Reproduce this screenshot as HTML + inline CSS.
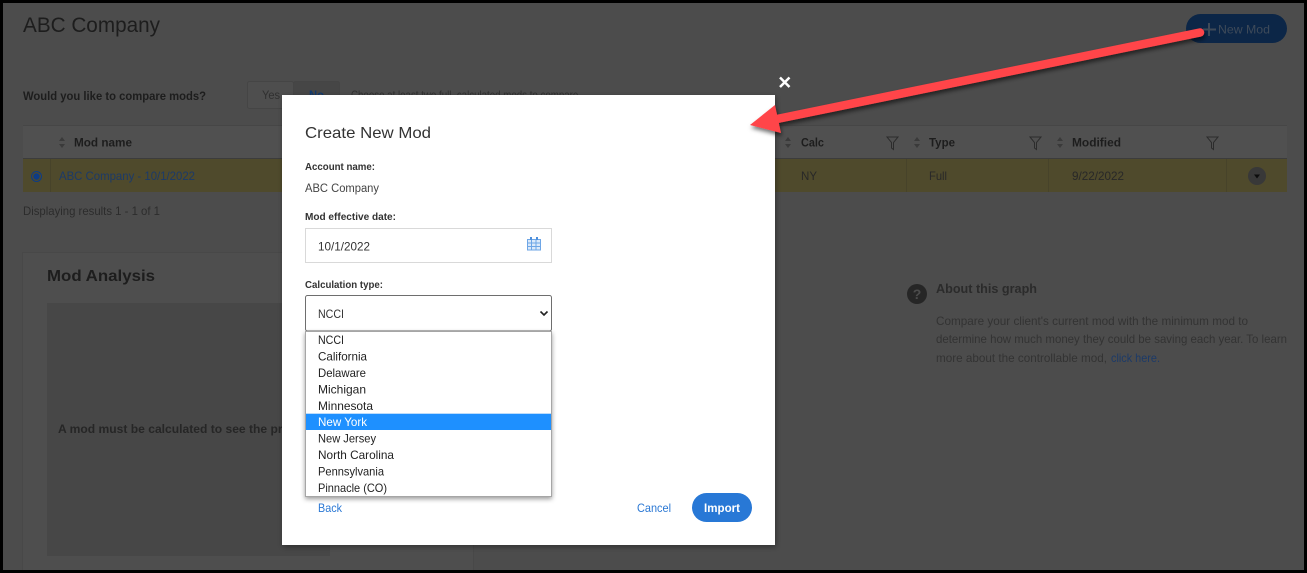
<!DOCTYPE html>
<html><head><meta charset="utf-8"><title>Create New Mod</title>
<style>
html,body{margin:0;padding:0;background:#000;width:1307px;height:573px;overflow:hidden}
svg{display:block}
text{font-family:"Liberation Sans",Arial,sans-serif;font-size:12px}
.b{font-weight:bold}
.d{fill:#1d1d1d}
.g{fill:#2f2f2f}
.m{fill:#333}
.i{fill:#222;font-size:12px}
</style></head><body>
<svg width="1307" height="573" viewBox="0 0 1307 573" xmlns="http://www.w3.org/2000/svg">
<defs>
<filter id="ms" x="-10%" y="-10%" width="120%" height="120%"><feDropShadow dx="1" dy="2" stdDeviation="3" flood-color="#000" flood-opacity=".35"/></filter>
<filter id="ds" x="-10%" y="-10%" width="120%" height="120%"><feDropShadow dx="0" dy="2" stdDeviation="2.5" flood-color="#000" flood-opacity=".4"/></filter>
<filter id="as" x="-10%" y="-30%" width="120%" height="170%"><feDropShadow dx="1" dy="3" stdDeviation="2" flood-color="#000" flood-opacity=".55"/></filter>
</defs>
<rect x="3" y="3" width="1301" height="567" fill="#4c4c4c"/>

<text class="d" x="23" y="32" font-size="21" style="font-size:21px" textLength="137" lengthAdjust="spacingAndGlyphs">ABC Company</text>
<text class="b d" x="23" y="100" textLength="183" lengthAdjust="spacingAndGlyphs">Would you like to compare mods?</text>
<rect x="247.500" y="81.500" width="46" height="27" rx="2" fill="#4e4e4e" stroke="#454545"/>
<rect x="293.500" y="81.500" width="46" height="27" rx="2" fill="#464646" stroke="#454545"/>
<text x="262" y="99" fill="#303030" textLength="18" lengthAdjust="spacingAndGlyphs">Yes</text>
<text class="b" x="309" y="99" fill="#123a70" textLength="15" lengthAdjust="spacingAndGlyphs">No</text>
<text x="351" y="99" fill="#303030" textLength="230" lengthAdjust="spacingAndGlyphs">Choose at least two full, calculated mods to compare.</text>

<rect x="23" y="125" width="1264" height="33" fill="#505050"/>
<rect x="23" y="125" width="1264" height="1" fill="#464646"/>
<rect x="23" y="158" width="1264" height="1" fill="#3c3c3c"/>
<rect x="23" y="159" width="1264" height="33" fill="#4f4a2c"/>
<rect x="50" y="159" width="1" height="33" fill="#47432a"/>
<rect x="906" y="159" width="1" height="33" fill="#47432a"/>
<rect x="1048" y="159" width="1" height="33" fill="#47432a"/>
<rect x="1226" y="159" width="1" height="33" fill="#47432a"/>

<g fill="#3a3a3a">
<path d="M59 141l3-4 3 4zM59 144l3 4 3-4z"/>
<path d="M785 141l3-4 3 4zM785 144l3 4 3-4z"/>
<path d="M914 141l3-4 3 4zM914 144l3 4 3-4z"/>
<path d="M1057 141l3-4 3 4zM1057 144l3 4 3-4z"/>
</g>
<text class="b d" x="74" y="146.500" textLength="58" lengthAdjust="spacingAndGlyphs">Mod name</text>
<text class="b d" x="801" y="146.500" textLength="23" lengthAdjust="spacingAndGlyphs">Calc</text>
<text class="b d" x="929" y="146.500" textLength="26" lengthAdjust="spacingAndGlyphs">Type</text>
<text class="b d" x="1072" y="146.500" textLength="49" lengthAdjust="spacingAndGlyphs">Modified</text>
<g fill="none" stroke="#2c2c2c" stroke-width="1">
<path d="M887 137h11l-4.500 5.500v7l-2-1.500v-5.500z"/>
<path d="M1030 137h11l-4.500 5.500v7l-2-1.500v-5.500z"/>
<path d="M1207 137h11l-4.500 5.500v7l-2-1.500v-5.500z"/>
</g>

<circle cx="36.500" cy="176.500" r="5" fill="none" stroke="#0d3c86" stroke-width="1"/>
<circle cx="36.500" cy="176.500" r="3.200" fill="#0d3c86"/>
<text x="59" y="180" fill="#1c3a68" textLength="136" lengthAdjust="spacingAndGlyphs">ABC Company - 10/1/2022</text>
<text x="801" y="180" fill="#282828" textLength="16" lengthAdjust="spacingAndGlyphs">NY</text>
<text x="929" y="180" fill="#282828" textLength="18" lengthAdjust="spacingAndGlyphs">Full</text>
<text x="1072" y="180" fill="#282828" textLength="52" lengthAdjust="spacingAndGlyphs">9/22/2022</text>
<circle cx="1257" cy="176" r="9" fill="#383838"/>
<path d="M1254 174.500h6l-3 4z" fill="#0d0d0d"/>
<text x="23" y="215" fill="#2c2c2c" textLength="137" lengthAdjust="spacingAndGlyphs">Displaying results 1 - 1 of 1</text>
<text x="155" y="215" fill="#1c3a68" textLength="5" lengthAdjust="spacingAndGlyphs"> </text>

<rect x="1186" y="14" width="101" height="29" rx="14.500" fill="#0c2647"/>
<path d="M1209 23v13M1203 29.500h13" stroke="#3f4a58" stroke-width="2"/>
<text x="1218" y="33.500" fill="#3e4a59" textLength="52" lengthAdjust="spacingAndGlyphs">New Mod</text>

<rect x="22.500" y="252.500" width="451" height="330" fill="#4e4e4e" stroke="#484848"/>
<rect x="47" y="303" width="283" height="253" fill="#474747"/>
<text class="b d" x="47" y="281" style="font-size:16px" textLength="108" lengthAdjust="spacingAndGlyphs">Mod Analysis</text>
<text class="b" x="58" y="433" fill="#262626" textLength="232" lengthAdjust="spacingAndGlyphs">A mod must be calculated to see the pro</text>

<circle cx="917" cy="294" r="10" fill="#262626"/>
<text class="b" x="917" y="299" fill="#4c4c4c" text-anchor="middle" style="font-size:14px">?</text>
<text class="b" x="936" y="293" fill="#2b2b2b" style="font-size:13px" textLength="101" lengthAdjust="spacingAndGlyphs">About this graph</text>
<text x="936" y="325" fill="#333" textLength="312" lengthAdjust="spacingAndGlyphs">Compare your client's current mod with the minimum mod to</text>
<text x="936" y="343" fill="#333" textLength="351" lengthAdjust="spacingAndGlyphs">determine how much money they could be saving each year. To learn</text>
<text x="936" y="362" fill="#333" textLength="171" lengthAdjust="spacingAndGlyphs">more about the controllable mod,</text>
<text x="1111" y="362" fill="#1c3a68" textLength="49" lengthAdjust="spacingAndGlyphs">click here.</text>

<rect x="282" y="95" width="493" height="450" fill="#fff" filter="url(#ms)"/>
<path d="M780 77.500l9.500 9.500M789.500 77.500l-9.500 9.500" stroke="#fff" stroke-width="2.500"/>

<text x="305" y="138" fill="#333" style="font-size:16px" textLength="126" lengthAdjust="spacingAndGlyphs">Create New Mod</text>
<text class="b m" x="305" y="170" style="font-size:10px" textLength="70" lengthAdjust="spacingAndGlyphs">Account name:</text>
<text x="305" y="192" fill="#444" style="font-size:11.500px" textLength="74" lengthAdjust="spacingAndGlyphs">ABC Company</text>
<text class="b m" x="305" y="220" style="font-size:10px" textLength="91" lengthAdjust="spacingAndGlyphs">Mod effective date:</text>
<rect x="305.500" y="228.500" width="246" height="34" fill="#fff" stroke="#d9d9d9"/>
<text x="318" y="250.500" fill="#333" textLength="52" lengthAdjust="spacingAndGlyphs">10/1/2022</text>
<g fill="none" stroke="#6ea6e6" stroke-width="1">
<rect x="527.500" y="239.500" width="13" height="10.500" fill="#dbe9fa"/>
<path d="M527.500 243h13M527.500 246.500h13M531.500 240v10M536 240v10"/>
</g>
<rect x="530" y="237" width="2" height="3" fill="#4c8fdc"/>
<rect x="536" y="237" width="2" height="3" fill="#4c8fdc"/>
<text class="b m" x="305" y="288" style="font-size:10px" textLength="78" lengthAdjust="spacingAndGlyphs">Calculation type:</text>
<rect x="305.500" y="295.500" width="246" height="35.500" rx="2" fill="#fff" stroke="#6e6e6e"/>
<text x="318" y="318" fill="#333" textLength="26" lengthAdjust="spacingAndGlyphs">NCCI</text>
<path d="M540.500 311.500l3.500 3.500 3.500-3.500" fill="none" stroke="#222" stroke-width="1.600"/>

<rect x="305.500" y="331.500" width="246" height="165" fill="#fff" stroke="#a6a6a6" filter="url(#ds)"/>
<rect x="306" y="413.500" width="245" height="16.500" fill="#1e90ff"/>
<rect x="306" y="413" width="245" height="1" fill="#bcdcfb"/>
<text class="i" x="318" y="344" textLength="26" lengthAdjust="spacingAndGlyphs">NCCI</text>
<text class="i" x="318" y="360.500" textLength="49" lengthAdjust="spacingAndGlyphs">California</text>
<text class="i" x="318" y="377" textLength="48" lengthAdjust="spacingAndGlyphs">Delaware</text>
<text class="i" x="318" y="393.500" textLength="48" lengthAdjust="spacingAndGlyphs">Michigan</text>
<text class="i" x="318" y="410" textLength="55" lengthAdjust="spacingAndGlyphs">Minnesota</text>
<text x="318" y="426" fill="#fff" textLength="49" lengthAdjust="spacingAndGlyphs">New York</text>
<text class="i" x="318" y="442.500" textLength="58" lengthAdjust="spacingAndGlyphs">New Jersey</text>
<text class="i" x="318" y="459" textLength="76" lengthAdjust="spacingAndGlyphs">North Carolina</text>
<text class="i" x="318" y="475.500" textLength="66" lengthAdjust="spacingAndGlyphs">Pennsylvania</text>
<text class="i" x="318" y="492" textLength="69" lengthAdjust="spacingAndGlyphs">Pinnacle (CO)</text>

<text x="318" y="512" fill="#2b78d4" textLength="24" lengthAdjust="spacingAndGlyphs">Back</text>
<text x="637" y="512" fill="#2b78d4" textLength="34" lengthAdjust="spacingAndGlyphs">Cancel</text>
<rect x="692" y="493" width="60" height="29" rx="14.500" fill="#2878d6"/>
<text class="b" x="704" y="512" fill="#fff" textLength="36" lengthAdjust="spacingAndGlyphs">Import</text>

<g filter="url(#as)">
<path d="M1200 32.500L777 119" stroke="#ff4448" stroke-width="8.500" stroke-linecap="round" fill="none"/>
<path d="M750 125L775 105L781 133z" fill="#ff4448"/>
</g>

<rect x="0" y="0" width="1307" height="3" fill="#000"/>
<rect x="0" y="570" width="1307" height="3" fill="#000"/>
<rect x="0" y="0" width="3" height="573" fill="#000"/>
<rect x="1304" y="0" width="3" height="573" fill="#000"/>
</svg>
</body></html>
